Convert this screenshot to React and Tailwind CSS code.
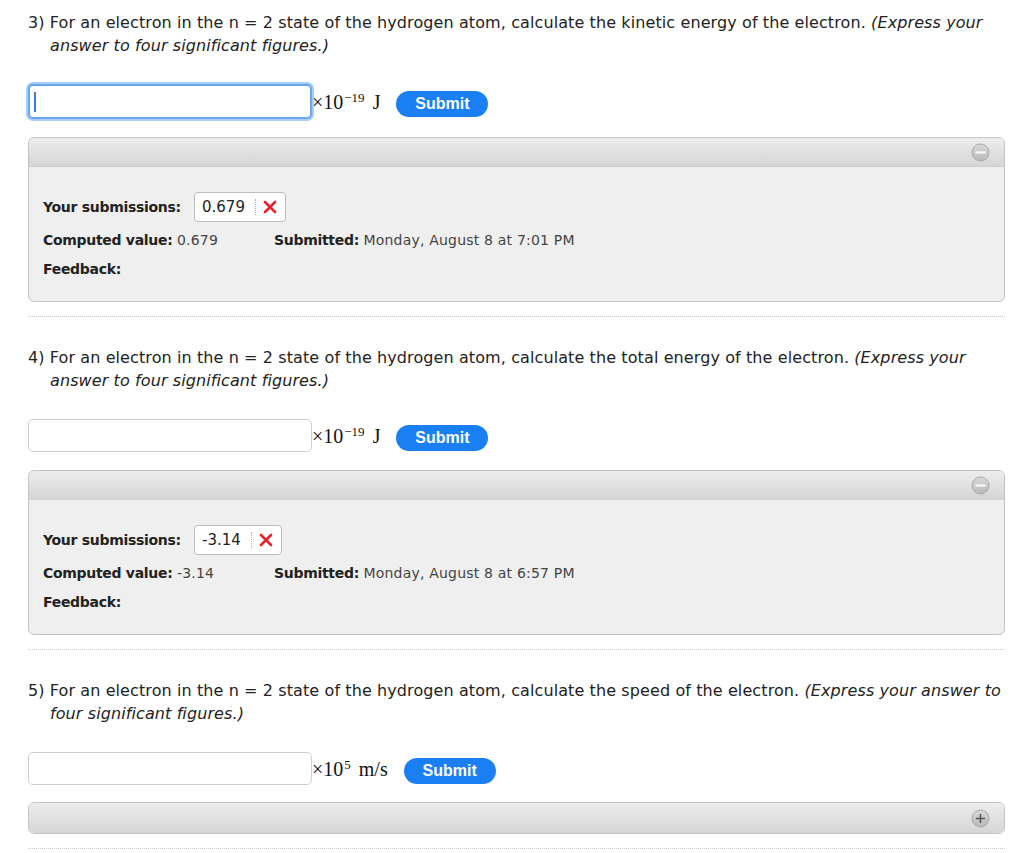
import React from "react";

const sans = { fontFamily: '"DejaVu Sans", Verdana, sans-serif' };

function Circle({ plus }) {
  const id = plus ? "gp" : "gm";
  return (
    <svg width="19" height="19" viewBox="0 0 19 19">
      <defs>
        <linearGradient id={id} x1="0" y1="0" x2="0" y2="1">
          <stop offset="0" stopColor="#dadada" />
          <stop offset="1" stopColor="#b8b8b8" />
        </linearGradient>
      </defs>
      <circle cx="9.5" cy="9.5" r="8.5" fill={`url(#${id})`} stroke="#a8a8a8" strokeWidth="1" />
      <line x1="5.5" y1="9.5" x2="13.5" y2="9.5" stroke={plus ? "#555" : "#f4f4f4"} strokeWidth={plus ? 1.5 : 2.4} strokeLinecap="round" />
      {plus && <line x1="9.5" y1="5.5" x2="9.5" y2="13.5" stroke="#555" strokeWidth="1.5" strokeLinecap="round" />}
    </svg>
  );
}

function Question({ num, line1, tail1, tail2, unit, focused, sub, submitted, computed, first, time }) {
  const open = !!time;
  return (
    <div>
      <div
        className={`${first ? "pt-[11px]" : "pt-[29px]"} text-[16px] leading-[23px] tracking-[0.1px] text-[#222] whitespace-nowrap`}
        style={sans}
      >
        <div>
          {num}) {line1} <i>{tail1}</i>
        </div>
        <div className="pl-[22px]">
          <i>{tail2}</i>
        </div>
      </div>
      <div className="mt-[27px] flex items-center">
        <div
          className={`relative w-[284px] rounded-[5px] bg-white ${
            focused
              ? "h-[35px] border-2 border-[#6aa6ee] shadow-[0_0_0_2px_#a9cdf6]"
              : "h-[33px] border border-[#cfcfcf]"
          }`}
        >
          {focused && <div className="absolute left-[4px] top-[6px] h-[20px] w-[2px] bg-[#3b7be0]" />}
        </div>
        <div
          className="text-[20px] leading-[24px] text-[#111] whitespace-nowrap"
          style={{ fontFamily: '"Liberation Serif", "Times New Roman", serif' }}
        >
          ×10<sup className="ml-[1px] text-[13px] relative -top-[7px]">{sub}</sup>
          <span className="ml-[8px]">{unit}</span>
        </div>
        <button
          className="ml-[16px] mt-[5px] h-[26px] w-[92px] rounded-full bg-[#1a7ff2] text-[16px] font-bold text-white"
          style={{ fontFamily: '"Liberation Sans", Arial, sans-serif' }}
        >
          Submit
        </button>
      </div>
      <div className={`${open ? "mt-[18px]" : "mt-[17px]"} rounded-[6px] border border-[#c4c4c4] bg-[#efefef] overflow-hidden`}>
        <div
          className={`flex ${open ? "h-[29px] border-b border-[#cfcfcf]" : "h-[30px]"} items-center justify-end pr-[14px] bg-gradient-to-b from-[#ededed] to-[#d5d5d5]`}
        >
          <Circle plus={!open} />
        </div>
        {open && (
          <div className="px-[14px] pt-[25px] pb-[22px] text-[14px] text-[#222]" style={sans}>
            <div className="flex items-center">
              <span className="font-bold w-[151px] tracking-[-0.3px]">Your submissions:</span>
              <span className="flex h-[30px] items-center rounded-[4px] border border-[#bdbdbd] bg-white pl-[7px] pr-[8px] text-[15px]">
                <span>{submitted}</span>
                <span className="ml-[10px] mr-[7px] h-[16px] border-l border-dotted border-[#b0b0b0]" />
                <svg width="14" height="14" viewBox="0 0 14 14">
                  <path d="M2 2 L12 12 M12 2 L2 12" stroke="#e8232b" strokeWidth="2.6" strokeLinecap="round" />
                </svg>
              </span>
            </div>
            <div className="mt-[8px] flex leading-[20px]">
              <span className="w-[231px]">
                <b className="tracking-[-0.3px]">Computed value:</b>{" "}
                <span className="text-[#444] tracking-[0.2px]">{computed}</span>
              </span>
              <span>
                <b className="tracking-[-0.3px]">Submitted:</b>{" "}
                <span className="text-[#444] tracking-[0.2px]">Monday, August 8 at {time}</span>
              </span>
            </div>
            <div className="mt-[9px] leading-[20px] font-bold tracking-[-0.3px]">Feedback:</div>
          </div>
        )}
      </div>
      <div className="mt-[14px] border-t border-dotted border-[#c8c8c8]" />
    </div>
  );
}

export default function App() {
  return (
    <div className="min-h-[853px] bg-white">
      <div className="ml-[28px] w-[977px]">
        <Question
          first
          focused
          num="3"
          line1="For an electron in the n = 2 state of the hydrogen atom, calculate the kinetic energy of the electron."
          tail1="(Express your"
          tail2="answer to four significant figures.)"
          sub="−19"
          unit="J"
          submitted="0.679"
          computed="0.679"
          time="7:01 PM"
        />
        <Question
          num="4"
          line1="For an electron in the n = 2 state of the hydrogen atom, calculate the total energy of the electron."
          tail1="(Express your"
          tail2="answer to four significant figures.)"
          sub="−19"
          unit="J"
          submitted="-3.14"
          computed="-3.14"
          time="6:57 PM"
        />
        <Question
          num="5"
          line1="For an electron in the n = 2 state of the hydrogen atom, calculate the speed of the electron."
          tail1="(Express your answer to"
          tail2="four significant figures.)"
          sub="5"
          unit="m/s"
        />
      </div>
    </div>
  );
}
